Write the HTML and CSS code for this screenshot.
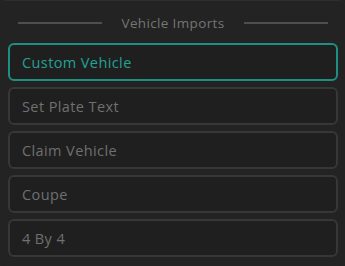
FILE: index.html
```html
<!DOCTYPE html>
<html lang="en">
<head>
    <meta charset="UTF-8">
    <meta name="viewport" content="width=device-width, initial-scale=1.0">
    <title>Vehicle Imports</title>
    <link rel="stylesheet" href="styles.css">
</head>
<body>
    <div class="menu">
        <div class="menu-header">
            <span class="line"></span>
            <span class="title">Vehicle Imports</span>
            <span class="line"></span>
        </div>

        <div class="menu-list">
            <div class="menu-item active">Custom Vehicle</div>
            <div class="menu-item">Set Plate Text</div>
            <div class="menu-item">Claim Vehicle</div>
            <div class="menu-item">Coupe</div>
            <div class="menu-item">4 By 4</div>
        </div>
    </div>
</body>
</html>
```
FILE: styles.css
```css
html, body {
    margin: 0;
    height: 100%;
    background-color: #232323;
}

body {
    font-family: "Open Sans", "Noto Sans", sans-serif;
}

.menu {
    box-sizing: border-box;
    height: 266px;
    padding: 8px 7px 8px 8px;
    border-top: 1px solid #2e2e2e;
    border-radius: 6px;
    background-color: #232323;
}

.menu-header {
    display: flex;
    align-items: center;
    gap: 20px;
    height: 29px;
    padding: 0 10px;
    margin-top: -1px;
    margin-bottom: 6px;
}

.menu-header .line {
    flex: 1;
    height: 2px;
    background-color: #4e4e4e;
}

.menu-header .title {
    color: #757575;
    font-size: 13.5px;
    letter-spacing: 0.35px;
}

.menu-list {
    display: flex;
    flex-direction: column;
    gap: 6px;
}

.menu-item {
    box-sizing: border-box;
    height: 38px;
    display: flex;
    align-items: center;
    padding: 0 12px;
    border: 2px solid #373737;
    border-radius: 6px;
    background-color: #1f1f1f;
    color: #707070;
    font-size: 14.5px;
    letter-spacing: 0.4px;
}

.menu-item.active {
    border-color: #1f8f83;
    color: #22a394;
}
```
